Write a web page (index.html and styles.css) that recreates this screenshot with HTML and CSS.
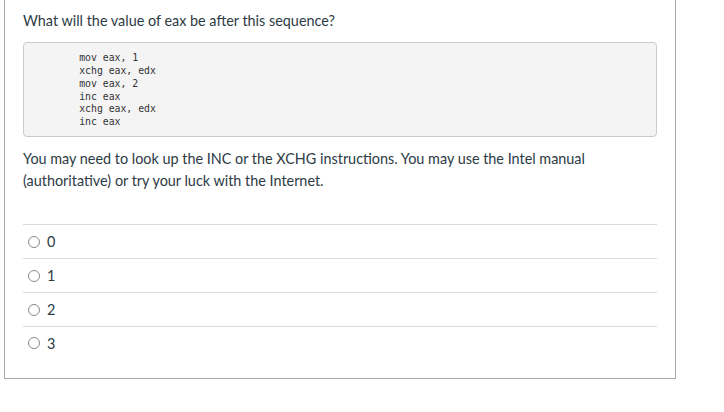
FILE: index.html
```html
<!DOCTYPE html>
<html>
<head>
<meta charset="utf-8">
<link rel="stylesheet" href="styles.css">
</head>
<body>
<div class="question">
  <div class="prompt">What will the value of eax be after this sequence?</div>
  <pre class="code">        mov eax, 1
        xchg eax, edx
        mov eax, 2
        inc eax
        xchg eax, edx
        inc eax</pre>
  <p class="note">You may need to look up the INC or the XCHG instructions. You may use the Intel manual (authoritative) or try your luck with the Internet.</p>
  <div class="answers">
    <label class="answer"><span class="radio"></span><span class="label">0</span></label>
    <label class="answer"><span class="radio"></span><span class="label">1</span></label>
    <label class="answer"><span class="radio"></span><span class="label">2</span></label>
    <label class="answer"><span class="radio"></span><span class="label">3</span></label>
  </div>
</div>
</body>
</html>
```
FILE: styles.css
```css
html, body {
  margin: 0;
  padding: 0;
  background: #fff;
}
body {
  font-family: Lato, "Liberation Sans", sans-serif;
  color: #2d3b45;
}
.question {
  margin-left: 4px;
  width: 634px;
  border: 1px solid #a8a8a8;
  border-top: none;
  padding: 11px 18px 14px 18px;
}
.prompt {
  font-size: 14.4px;
  line-height: 20px;
}
.code {
  margin: 11px 0 0 0;
  background: #f4f4f4;
  border: 1px solid #cbcbcb;
  border-radius: 4px;
  padding: 9px 8px 7px 8px;
  font-family: "DejaVu Sans Mono", monospace;
  font-size: 9.8px;
  line-height: 12.85px;
  color: #333;
}
.note {
  margin: 11px 0 0 0;
  font-size: 14.4px;
  line-height: 22px;
}
.answers {
  margin-top: 32px;
}
.answer {
  display: flex;
  align-items: center;
  height: 33px;
  border-top: 1px solid #dcdcdc;
  font-size: 14.4px;
}
.answer:last-child {
  height: 38px;
  align-items: flex-start;
  padding-top: 10px;
  box-sizing: border-box;
}
.radio {
  width: 10px;
  height: 10px;
  border: 1px solid #8a8a8a;
  border-radius: 50%;
  margin: 0 7px 0 5px;
  flex: none;
}
.label {
  line-height: 14px;
}
```
